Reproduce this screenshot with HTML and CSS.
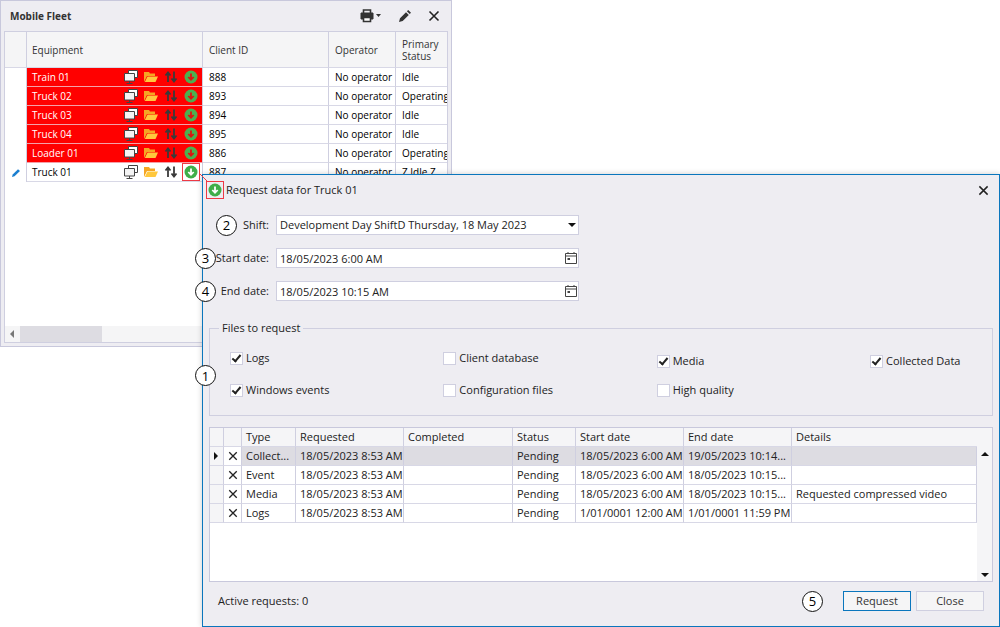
FILE: index.html
```html
<!DOCTYPE html>
<html lang="en">
<head>
    <meta charset="UTF-8">
    <meta name="viewport" content="width=device-width, initial-scale=1.0">
    <title>Mobile Fleet</title>
    <link rel="stylesheet" href="styles.css">
</head>
<body>
    <!-- Shared icons -->
    <svg class="sprite" aria-hidden="true">
        <symbol id="i-screens" viewBox="0 0 14 14">
            <path d="M4.500.5h9v7h-9z" fill="#fff" stroke="#444"/>
            <path d="M.5 3.500h10v7.500H.5z" fill="#f4f4f4" stroke="#444"/>
            <path d="M2.500 13.500h6M5.500 11v2" stroke="#444" fill="none"/>
        </symbol>
        <symbol id="i-folder" viewBox="0 0 14 14">
            <path d="M0 12V2h5l1 1.500h5V6H3z" fill="#f5a623"/>
            <path d="M3.500 6.500H14L11.500 12H.8z" fill="#ffc83d"/>
        </symbol>
        <symbol id="i-arrows" viewBox="0 0 14 14">
            <path d="M4 12V3M1.500 5.500L4 2.500l2.500 3M10 1.500V11M7.500 8.500l2.500 3 2.500-3" fill="none" stroke="#3a3a3a" stroke-width="1.8"/>
        </symbol>
        <symbol id="i-down-red" viewBox="0 0 14 14">
            <circle cx="7" cy="7" r="6.500" fill="#4caf50"/>
            <path d="M7 3.500v6M4.300 7L7 9.800 9.700 7" fill="none" stroke="#e01010" stroke-width="1.8"/>
        </symbol>
        <symbol id="i-down" viewBox="0 0 14 14">
            <circle cx="7" cy="7" r="6.500" fill="#3fae49"/>
            <path d="M7 3.500v6M4.300 7L7 9.800 9.700 7" fill="none" stroke="#fff" stroke-width="1.8"/>
        </symbol>
        <symbol id="i-close" viewBox="0 0 12 12">
            <path d="M1.500 1.500l9 9M10.500 1.500l-9 9" fill="none" stroke="currentColor" stroke-width="1.600"/>
        </symbol>
        <symbol id="i-calendar" viewBox="0 0 12 12">
            <path d="M.5 1.500h11v10H.5zM.5 4h11M3 0v2M9 0v2" fill="none" stroke="#444"/>
            <path d="M2.500 6h2.500v2H2.500z" fill="#444"/>
        </symbol>
    </svg>

    <section class="fleet">
        <header class="fleet-header">
            <h1>Mobile Fleet</h1>
            <div class="tools">
                <button type="button" class="icon-btn print" aria-label="Print">
                    <svg width="22" height="14" viewBox="0 0 22 14">
                        <path d="M3.500 4V1h7v3" fill="none" stroke="#333" stroke-width="1.600"/>
                        <path d="M1 4h12v6h-2V8H3v2H1z" fill="#333" stroke="#333"/>
                        <path d="M3.500 8.500h7v4h-7z" fill="#fff" stroke="#333" stroke-width="1.600"/>
                        <path d="M16 5h5l-2.500 3z" fill="#333"/>
                    </svg>
                </button>
                <button type="button" class="icon-btn" aria-label="Edit">
                    <svg width="12" height="12" viewBox="0 0 12 12">
                        <path d="M0 12l1-3.700L7 2.200 9.800 5 3.700 11zM7.900 1.300L9.200 0 12 2.800l-1.300 1.300z" fill="#333"/>
                    </svg>
                </button>
                <button type="button" class="icon-btn" aria-label="Close panel">
                    <svg width="12" height="12"><use href="#i-close"/></svg>
                </button>
            </div>
        </header>
        <div class="fleet-grid">
            <table class="fleet-table">
                <colgroup>
                    <col class="c-mark"><col class="c-equip"><col class="c-client"><col class="c-oper"><col>
                </colgroup>
                <thead>
                    <tr><th></th><th>Equipment</th><th>Client ID</th><th>Operator</th><th>Primary Status</th></tr>
                </thead>
                <tbody>
                    <tr class="alert">
                        <td></td>
                        <td><div class="equip"><span>Train 01</span><svg><use href="#i-screens"/></svg><svg><use href="#i-folder"/></svg><svg><use href="#i-arrows"/></svg><svg><use href="#i-down-red"/></svg></div></td>
                        <td>888</td><td>No operator</td><td>Idle</td>
                    </tr>
                    <tr class="alert">
                        <td></td>
                        <td><div class="equip"><span>Truck 02</span><svg><use href="#i-screens"/></svg><svg><use href="#i-folder"/></svg><svg><use href="#i-arrows"/></svg><svg><use href="#i-down-red"/></svg></div></td>
                        <td>893</td><td>No operator</td><td>Operating</td>
                    </tr>
                    <tr class="alert">
                        <td></td>
                        <td><div class="equip"><span>Truck 03</span><svg><use href="#i-screens"/></svg><svg><use href="#i-folder"/></svg><svg><use href="#i-arrows"/></svg><svg><use href="#i-down-red"/></svg></div></td>
                        <td>894</td><td>No operator</td><td>Idle</td>
                    </tr>
                    <tr class="alert">
                        <td></td>
                        <td><div class="equip"><span>Truck 04</span><svg><use href="#i-screens"/></svg><svg><use href="#i-folder"/></svg><svg><use href="#i-arrows"/></svg><svg><use href="#i-down-red"/></svg></div></td>
                        <td>895</td><td>No operator</td><td>Idle</td>
                    </tr>
                    <tr class="alert">
                        <td></td>
                        <td><div class="equip"><span>Loader 01</span><svg><use href="#i-screens"/></svg><svg><use href="#i-folder"/></svg><svg><use href="#i-arrows"/></svg><svg><use href="#i-down-red"/></svg></div></td>
                        <td>886</td><td>No operator</td><td>Operating</td>
                    </tr>
                    <tr>
                        <td class="editing"><svg width="10" height="10" viewBox="0 0 10 10"><path d="M1 9l.7-2.500L7 1.200 9 3 3.500 8.300z" fill="#1a7fd0"/></svg></td>
                        <td><div class="equip"><span>Truck 01</span><svg><use href="#i-screens"/></svg><svg><use href="#i-folder"/></svg><svg><use href="#i-arrows"/></svg><svg class="picked"><use href="#i-down"/></svg></div></td>
                        <td>887</td><td>No operator</td><td>Z Idle Z</td>
                    </tr>
                </tbody>
            </table>
            <div class="hscroll"><span class="arrow-left"></span><span class="thumb"></span></div>
        </div>
    </section>

    <section class="dialog" role="dialog" aria-labelledby="dialogTitle">
        <svg class="connector" width="8" height="8" viewBox="0 0 8 8"><path d="M0 0l8 8" stroke="#ee3a44"/></svg>
        <header class="dialog-header">
            <svg class="picked"><use href="#i-down"/></svg>
            <h2 id="dialogTitle">Request data for Truck 01</h2>
            <button type="button" class="icon-btn" aria-label="Close dialog">
                <svg width="11" height="11"><use href="#i-close"/></svg>
            </button>
        </header>

        <form class="request-form">
            <div class="field">
                <span class="step step-in">2</span>
                <label for="shift">Shift:</label>
                <div class="control">
                    <select id="shift"><option>Development Day ShiftD Thursday, 18 May 2023</option></select>
                    <span class="arrow-down"></span>
                </div>
            </div>
            <div class="field">
                <span class="step step-edge">3</span>
                <label for="startDate">Start date:</label>
                <div class="control">
                    <input type="text" id="startDate" value="18/05/2023 6:00 AM">
                    <svg width="12" height="12"><use href="#i-calendar"/></svg>
                </div>
            </div>
            <div class="field">
                <span class="step step-edge">4</span>
                <label for="endDate">End date:</label>
                <div class="control">
                    <input type="text" id="endDate" value="18/05/2023 10:15 AM">
                    <svg width="12" height="12"><use href="#i-calendar"/></svg>
                </div>
            </div>

            <fieldset class="files">
                <legend>Files to request</legend>
                <span class="step step-files">1</span>
                <div class="file-options">
                    <label><input type="checkbox" checked>Logs</label>
                    <label><input type="checkbox">Client database</label>
                    <label class="low"><input type="checkbox" checked>Media</label>
                    <label class="low"><input type="checkbox" checked>Collected Data</label>
                    <label><input type="checkbox" checked>Windows events</label>
                    <label><input type="checkbox">Configuration files</label>
                    <label><input type="checkbox">High quality</label>
                </div>
            </fieldset>

            <div class="requests">
                <table class="request-table">
                    <colgroup>
                        <col class="c-arrow"><col class="c-del"><col class="c-type"><col class="c-date"><col class="c-done"><col class="c-status"><col class="c-date"><col class="c-date"><col>
                    </colgroup>
                    <thead>
                        <tr><th></th><th></th><th>Type</th><th>Requested</th><th>Completed</th><th>Status</th><th>Start date</th><th>End date</th><th>Details</th></tr>
                    </thead>
                    <tbody>
                        <tr class="selected">
                            <td><span class="arrow-right"></span></td>
                            <td><button type="button" class="icon-btn" aria-label="Remove"><svg width="10" height="10"><use href="#i-close"/></svg></button></td>
                            <td>Collect...</td><td>18/05/2023 8:53 AM</td><td></td><td>Pending</td><td>18/05/2023 6:00 AM</td><td>19/05/2023 10:14...</td><td></td>
                        </tr>
                        <tr>
                            <td></td>
                            <td><button type="button" class="icon-btn" aria-label="Remove"><svg width="10" height="10"><use href="#i-close"/></svg></button></td>
                            <td>Event</td><td>18/05/2023 8:53 AM</td><td></td><td>Pending</td><td>18/05/2023 6:00 AM</td><td>18/05/2023 10:15...</td><td></td>
                        </tr>
                        <tr>
                            <td></td>
                            <td><button type="button" class="icon-btn" aria-label="Remove"><svg width="10" height="10"><use href="#i-close"/></svg></button></td>
                            <td>Media</td><td>18/05/2023 8:53 AM</td><td></td><td>Pending</td><td>18/05/2023 6:00 AM</td><td>18/05/2023 10:15...</td><td>Requested compressed video</td>
                        </tr>
                        <tr>
                            <td></td>
                            <td><button type="button" class="icon-btn" aria-label="Remove"><svg width="10" height="10"><use href="#i-close"/></svg></button></td>
                            <td>Logs</td><td>18/05/2023 8:53 AM</td><td></td><td>Pending</td><td>1/01/0001 12:00 AM</td><td>1/01/0001 11:59 PM</td><td></td>
                        </tr>
                    </tbody>
                </table>
                <div class="vscroll"><span class="arrow-up"></span><span class="arrow-down"></span></div>
            </div>

            <footer class="dialog-footer">
                <span class="active-count">Active requests: 0</span>
                <span class="step">5</span>
                <button type="submit" class="btn primary">Request</button>
                <button type="button" class="btn">Close</button>
            </footer>
        </form>
    </section>
</body>
</html>
```
FILE: styles.css
```css
* {
    box-sizing: border-box;
}

body {
    margin: 0;
    background-color: #fff;
    color: #222;
    font-family: "Open Sans", "Noto Sans", sans-serif;
    font-size: 11px;
    line-height: 14px;
}

h1, h2 {
    margin: 0;
    font-size: 11px;
}

svg {
    display: block;
    flex: none;
}

.sprite {
    position: absolute;
    width: 0;
    height: 0;
}

table {
    width: 100%;
    table-layout: fixed;
    border-collapse: separate;
    border-spacing: 0;
}

th, td {
    padding: 0 0 0 6px;
    border-right: 1px solid #cfcfe0;
    border-bottom: 1px solid #d8d8e6;
    text-align: left;
    font-weight: normal;
    white-space: nowrap;
    overflow: hidden;
}

.icon-btn {
    display: flex;
    padding: 0;
    border: none;
    background: none;
    color: #222;
    cursor: pointer;
}

/* Fleet panel */
.fleet {
    width: 100%;
    max-width: 452px;
    padding: 0 3px 3px;
    border: 1px solid #c8c8dc;
    background-color: #eeedf2;
}

.fleet-header {
    display: flex;
    align-items: center;
    justify-content: space-between;
    height: 30px;
    padding: 0 8px 0 6px;
}

.fleet-header h1 {
    color: #333;
    font-size: 10px;
}

.tools {
    display: flex;
    align-items: center;
    gap: 17px;
}

.fleet-grid {
    display: flex;
    flex-direction: column;
    justify-content: space-between;
    min-height: 312px;
    border: 1px solid #cfcfe0;
    background-color: #fff;
}

.fleet-table {
    color: #000;
    font-size: 10px;
}

.fleet-table th {
    height: 36px;
    background-color: #f5f5f6;
    color: #333;
    font-weight: 500;
    line-height: 12px;
    white-space: normal;
}

.fleet-table td {
    height: 19px;
    font-weight: 500;
}

.fleet-table td:first-child {
    border-bottom: none;
}

.fleet-table th:last-child,
.fleet-table td:last-child {
    border-right: none;
}

.fleet-table th:nth-child(2),
.fleet-table td:nth-child(2) {
    padding-left: 5px;
}

.c-mark { width: 22px; }
.c-equip { width: 176px; }
.c-client { width: 126px; }
.c-oper { width: 67px; }

.equip {
    display: flex;
    align-items: center;
    gap: 6px;
    padding-right: 4px;
}

.equip span {
    flex: 1;
}

.equip svg {
    width: 14px;
    height: 14px;
}

.alert td:nth-child(2) {
    background-color: #f00;
    border-bottom-color: #f4a0a8;
    color: #fff;
}

.equip .picked,
.dialog .picked {
    width: 18px;
    height: 18px;
    padding: 1px;
    border: 1px solid #ee3a44;
}

.equip .picked {
    margin: 0 -2px;
}

.hscroll {
    display: flex;
    align-items: center;
    height: 16px;
    background-color: #f5f5f6;
}

.thumb {
    width: 82px;
    height: 16px;
    margin-left: 6px;
    background-color: #dddce2;
}

/* Arrows */
.arrow-left, .arrow-right, .arrow-up, .arrow-down {
    display: block;
    width: 0;
    height: 0;
    border: 4px solid transparent;
}

.arrow-left {
    margin-left: 1px;
    border-right-color: #777;
}

.arrow-right {
    border-left-color: #111;
    border-right-width: 0;
}

.arrow-up {
    border-bottom-color: #111;
    border-top-width: 0;
}

.arrow-down {
    border-top-color: #111;
    border-bottom-width: 0;
}

/* Request dialog */
.dialog {
    position: absolute;
    top: 174px;
    left: 202px;
    right: 0;
    border: 1px solid #0a76bd;
    background-color: #eeedf2;
    box-shadow: 0 0 6px rgba(0, 0, 0, 0.2);
}

.connector {
    position: absolute;
    top: -1px;
    left: -3px;
}

.dialog-header {
    display: flex;
    align-items: center;
    height: 30px;
    padding: 0 10px 0 3px;
}

.dialog-header h2 {
    flex: 1;
    margin-left: 2px;
    font-weight: normal;
}

.request-form {
    padding: 10px 6px 6px;
}

.field {
    position: relative;
    display: flex;
    align-items: center;
    margin-bottom: 13px;
}

.field label {
    width: 60px;
    text-align: right;
}

.control {
    position: relative;
    flex: 0 1 303px;
    margin-left: 7px;
}

.control input,
.control select {
    display: block;
    width: 100%;
    height: 20px;
    padding: 0 20px 0 3px;
    appearance: none;
    border: 1px solid #cfcfe0;
    border-radius: 0;
    background-color: #fff;
    color: #222;
    font: inherit;
}

.control svg,
.control .arrow-down {
    position: absolute;
    right: 2px;
    top: 4px;
}

.control .arrow-down {
    right: 3px;
    top: 8px;
}

/* Numbered callouts */
.step {
    display: flex;
    align-items: center;
    justify-content: center;
    width: 21px;
    height: 21px;
    border: 1px solid #111;
    border-radius: 50%;
    background-color: #fff;
    color: #000;
    font-size: 13px;
}

.step-in, .step-edge, .step-files {
    position: absolute;
}

.step-in {
    left: 7px;
}

.step-edge {
    left: -14px;
}

.step-files {
    top: 30px;
    left: -15px;
}

.files {
    position: relative;
    margin: 20px 0 11px;
    padding: 16px 0 18px 20px;
    border: 1px solid #cfcfe0;
}

.files legend {
    margin-left: -11px;
    padding: 0 3px;
}

.file-options {
    display: grid;
    grid-template-columns: 28% 28% 28% 16%;
    grid-template-rows: 17px 14px;
    row-gap: 15px;
}

.file-options label {
    display: flex;
    align-items: center;
    align-self: start;
    gap: 3px;
}

.file-options .low {
    align-self: end;
}

.file-options input {
    display: flex;
    align-items: center;
    justify-content: center;
    width: 13px;
    height: 13px;
    margin: 0;
    appearance: none;
    border: 1px solid #cfcfe0;
    background-color: #fff;
}

.file-options input:checked::after {
    content: "";
    box-sizing: border-box;
    width: 5px;
    height: 9px;
    margin-bottom: 2px;
    border: solid #222;
    border-width: 0 2px 2px 0;
    transform: rotate(40deg);
}

/* Requests table */
.requests {
    display: flex;
    min-height: 155px;
    border: 1px solid #c8c8dc;
    background-color: #fff;
}

.request-table {
    flex: 1;
    align-self: flex-start;
}

.request-table th,
.request-table td {
    height: 19px;
    padding-left: 4px;
}

.request-table th,
.request-table td:first-child {
    background-color: #f5f5f7;
}

.request-table th:last-child {
    border-right: none;
}

.request-table .selected td:nth-child(n+3) {
    background-color: #dddce2;
}

.c-arrow { width: 14px; }
.c-del { width: 18px; }
.c-type { width: 54px; }
.c-date { width: 108px; }
.c-done { width: 109px; }
.c-status { width: 63px; }

.vscroll {
    display: flex;
    flex-direction: column;
    align-items: center;
    justify-content: space-between;
    width: 15px;
    padding: 5px 0 4px;
    border-top: 19px solid #f5f5f7;
    background-color: #f5f5f7;
}

.dialog-footer {
    display: flex;
    align-items: center;
    height: 38px;
    padding: 0 9px;
}

.active-count {
    flex: 1;
}

.dialog-footer .step {
    margin-right: 20px;
}

.btn {
    width: 68px;
    height: 20px;
    padding: 0;
    border: 1px solid #cfcfe0;
    background-color: #f5f5f6;
    color: #333;
    font: inherit;
    cursor: pointer;
}

.btn + .btn {
    margin-left: 5px;
}

.btn.primary {
    border-color: #0a76bd;
}
```
